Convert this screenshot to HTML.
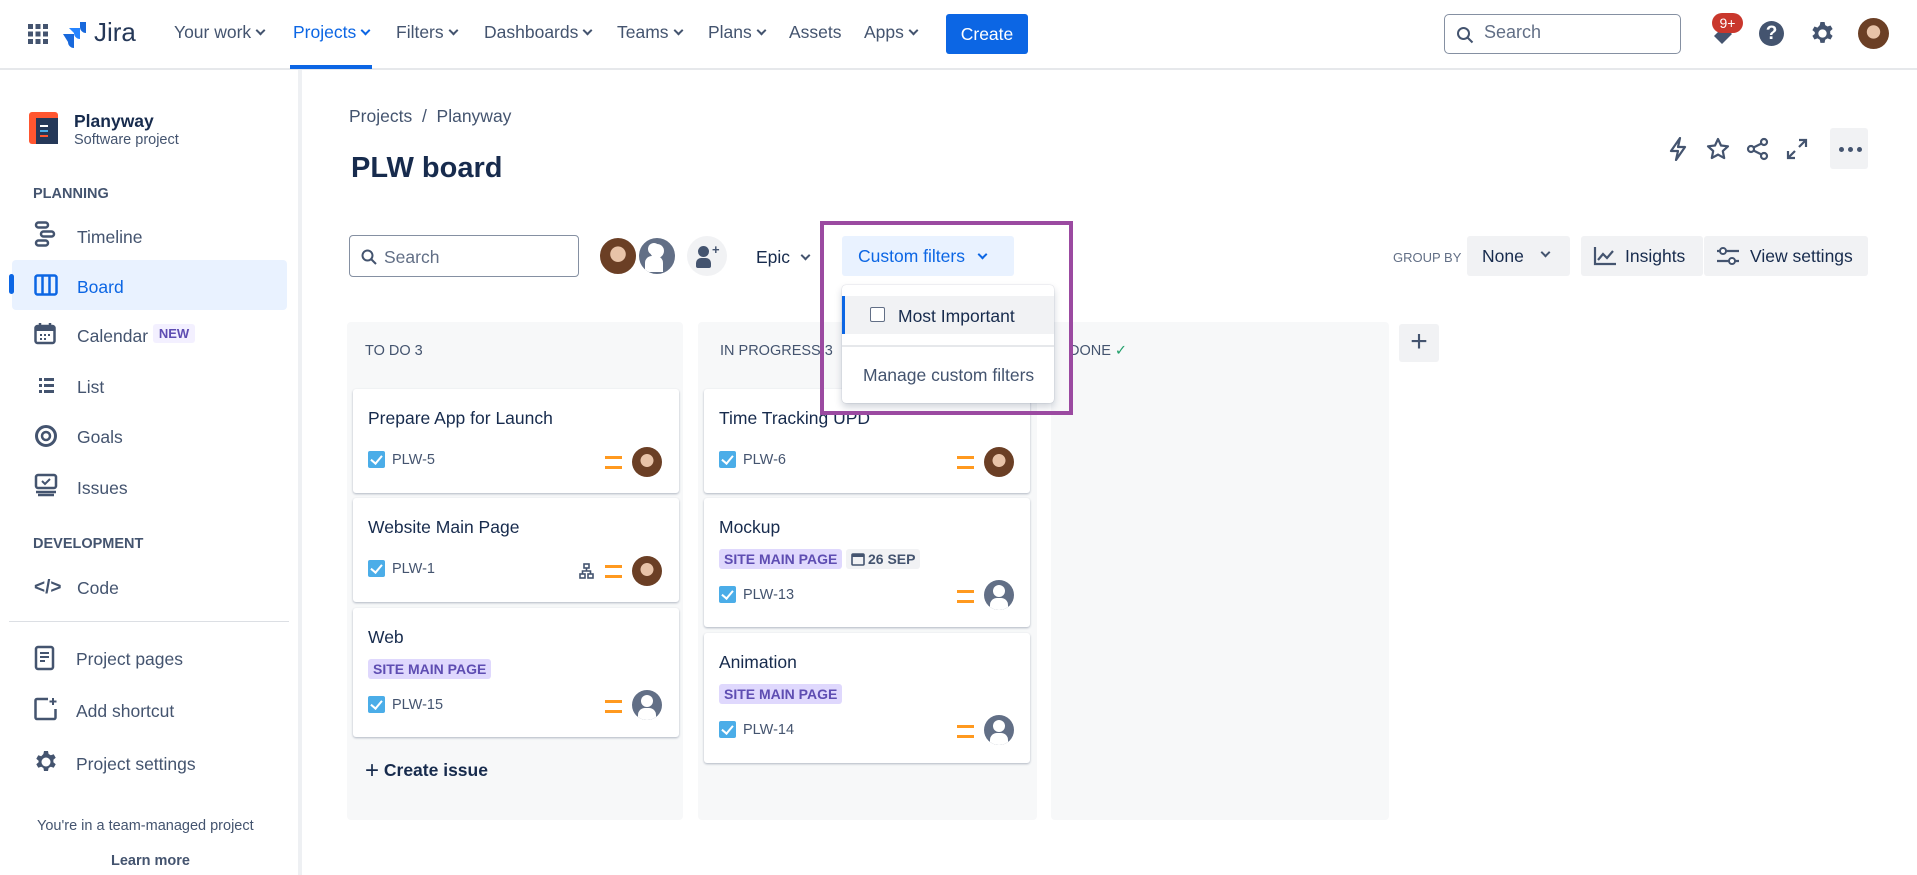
<!DOCTYPE html>
<html><head><meta charset="utf-8"><style>
*{box-sizing:border-box;margin:0;padding:0}
body{width:1917px;height:875px;overflow:hidden;background:#fff;font-family:"Liberation Sans",Arial,sans-serif;color:#172b4d;position:relative;font-size:17.5px}
.a{position:absolute;white-space:nowrap}
.nav{top:22px;font-size:17.5px;color:#44546f}
.chev{display:inline-block;width:7px;height:7px;border-right:2px solid currentColor;border-bottom:2px solid currentColor;transform:rotate(45deg);margin-left:6px;position:relative;top:-4px}
.side{left:77px;font-size:17.5px;color:#44546f}
.ic{position:absolute;left:34px}
.sec{left:33px;font-size:14.5px;font-weight:bold;color:#44546f}
.col{position:absolute;top:322px;height:498px;background:#f7f8f9;border-radius:4px}
.ch{position:absolute;top:21px;left:18px;font-size:14.5px;color:#44546f}
.card{position:absolute;left:6px;width:326px;background:#fff;border-radius:3px;box-shadow:0 1px 2px rgba(9,30,66,.3)}
.ct{position:absolute;left:15px;font-size:17.5px;color:#172b4d}
.key{position:absolute;left:15px;font-size:14.5px;color:#44546f;display:flex;align-items:center}
.cb{width:17px;height:17px;background:#4bade8;border-radius:2px;margin-right:7px;position:relative}
.cb:after{content:"";position:absolute;left:5px;top:2px;width:5px;height:9px;border-right:2px solid #fff;border-bottom:2px solid #fff;transform:rotate(40deg)}
.pri{position:absolute;width:17px;height:13px;border-top:3px solid #ff991f;border-bottom:3px solid #ff991f}
.ph{position:absolute;width:30px;height:30px;border-radius:50%;background:radial-gradient(circle at 50% 45%,#e8c3a8 0 28%,#6b3f25 30% 100%)}
.gen{position:absolute;width:30px;height:30px;border-radius:50%;background:#626f86;overflow:hidden}
.gen:before{content:"";position:absolute;left:9px;top:5px;width:12px;height:12px;border-radius:50%;background:#fff}
.gen:after{content:"";position:absolute;left:6px;top:18px;width:18px;height:16px;border-radius:7px 7px 0 0;background:#fff}
.lab{position:absolute;left:15px;background:#dfd8fd;color:#5e4db2;font-weight:bold;font-size:14px;padding:2px 5px;border-radius:3px}
.btn{position:absolute;top:236px;height:40px;background:#f1f2f4;border-radius:3px;font-size:17.5px;color:#172b4d;display:flex;align-items:center}
</style></head><body>
<div class="a" style="left:0;top:68px;width:1917px;height:2px;background:#e6e8eb"></div>
<svg class="a" style="left:28px;top:24px" width="20" height="20"><g fill="#44546f"><rect x="0" y="0" width="5" height="5"/><rect x="7.5" y="0" width="5" height="5"/><rect x="15" y="0" width="5" height="5"/><rect x="0" y="7.5" width="5" height="5"/><rect x="7.5" y="7.5" width="5" height="5"/><rect x="15" y="7.5" width="5" height="5"/><rect x="0" y="15" width="5" height="5"/><rect x="7.5" y="15" width="5" height="5"/><rect x="15" y="15" width="5" height="5"/></g></svg>
<svg class="a" style="left:63px;top:22px" width="24" height="26" viewBox="0 0 24 26"><path d="M12 0h11v11a6 6 0 0 1-6-6V0z" fill="#1868db"/><path d="M6 6h11v11a6 6 0 0 1-6-6z" fill="#2684ff"/><path d="M0 12h11v14a6 6 0 0 1-6-6z" fill="#1868db"/></svg>
<div class="a" style="left:94px;top:17px;font-size:26px;color:#253858">Jira</div>
<div class="a nav" style="left:174px">Your work<span class="chev"></span></div>
<div class="a nav" style="left:293px;color:#0c66e4">Projects<span class="chev"></span></div>
<div class="a" style="left:290px;top:65px;width:82px;height:4px;background:#0c66e4"></div>
<div class="a nav" style="left:396px">Filters<span class="chev"></span></div>
<div class="a nav" style="left:484px">Dashboards<span class="chev"></span></div>
<div class="a nav" style="left:617px">Teams<span class="chev"></span></div>
<div class="a nav" style="left:708px">Plans<span class="chev"></span></div>
<div class="a nav" style="left:789px">Assets</div>
<div class="a nav" style="left:864px">Apps<span class="chev"></span></div>
<div class="a" style="left:946px;top:14px;width:82px;height:40px;background:#0c66e4;border-radius:3px;color:#fff;font-size:17.5px;text-align:center;line-height:40px">Create</div>
<div class="a" style="left:1444px;top:14px;width:237px;height:40px;border:1.5px solid #8590a2;border-radius:5px"></div>
<svg class="a" style="left:1456px;top:26px" width="18" height="18"><circle cx="7.5" cy="7.5" r="5.5" stroke="#44546f" stroke-width="2" fill="none"/><path d="M11.5 11.5l5 5" stroke="#44546f" stroke-width="2"/></svg>
<div class="a" style="left:1484px;top:22px;font-size:18px;color:#626f86">Search</div>
<svg class="a" style="left:1710px;top:20px" width="28" height="28"><path d="M4 16l10-10 8 8-10 10z" fill="#44546f"/></svg>
<div class="a" style="left:1712px;top:13px;width:31px;height:20px;background:#c9372c;border-radius:10px;color:#fff;font-size:14px;text-align:center;line-height:20px">9+</div>
<div class="a" style="left:1759px;top:21px;width:25px;height:25px;border-radius:50%;background:#44546f;color:#fff;font-weight:bold;font-size:19px;text-align:center;line-height:25px">?</div>
<svg class="a" style="left:1810px;top:21px" width="25" height="25" viewBox="0 0 24 24"><path fill="#44546f" d="M10 1h4l.6 3 2.2 1.3 2.9-1 2 3.4-2.3 2 v2.6l2.3 2-2 3.4-2.9-1-2.2 1.3-.6 3h-4l-.6-3-2.2-1.3-2.9 1-2-3.4 2.3-2V10.7l-2.3-2 2-3.4 2.9 1L9.4 4z"/><circle cx="12" cy="12" r="4" fill="#fff"/></svg>
<div class="ph" style="left:1858px;top:18px;width:31px;height:31px"></div>

<div class="a" style="left:298px;top:70px;width:4px;height:805px;background:#eef0f3"></div>
<div class="a" style="left:29px;top:112px;width:29px;height:32px;background:#ff5630;border-radius:3px"></div>
<div class="a" style="left:36px;top:118px;width:22px;height:26px;background:#253858"></div>
<div class="a" style="left:40px;top:125px;width:8px;height:2px;background:#fff;box-shadow:0 5px #4bade8,0 10px #ff5630"></div>
<div class="a" style="left:74px;top:111px;font-size:17.5px;font-weight:bold;color:#172b4d">Planyway</div>
<div class="a" style="left:74px;top:132px;font-size:14.5px;color:#44546f">Software project</div>
<div class="a sec" style="top:186px">PLANNING</div>
<svg class="ic" style="top:221px" width="22" height="26"><g fill="none" stroke="#44546f" stroke-width="2.5"><rect x="2" y="1.5" width="12" height="5" rx="2.5"/><rect x="7" y="10.5" width="13" height="5" rx="2.5"/><rect x="2" y="19.5" width="12" height="5" rx="2.5"/></g></svg>
<div class="a side" style="top:227px">Timeline</div>
<div class="a" style="left:12px;top:260px;width:275px;height:50px;background:#e9f2ff;border-radius:4px"></div>
<div class="a" style="left:9px;top:274px;width:5px;height:20px;background:#0c66e4;border-radius:3px"></div>
<svg class="ic" style="top:274px" width="24" height="22"><rect x="1.5" y="1.5" width="21" height="19" rx="2" fill="none" stroke="#0c66e4" stroke-width="2.5"/><path d="M8.5 2v18M15.5 2v18" stroke="#0c66e4" stroke-width="2.5"/></svg>
<div class="a side" style="top:277px;color:#0c66e4">Board</div>
<svg class="ic" style="top:323px" width="22" height="22"><rect x="1.5" y="3" width="19" height="17" rx="2" fill="none" stroke="#44546f" stroke-width="2.5"/><rect x="1.5" y="3" width="19" height="5" fill="#44546f"/><path d="M6 0v5M16 0v5" stroke="#44546f" stroke-width="2.5"/><g fill="#44546f"><rect x="6" y="11" width="2" height="2"/><rect x="10" y="11" width="2" height="2"/><rect x="14" y="11" width="2" height="2"/><rect x="6" y="15" width="2" height="2"/><rect x="10" y="15" width="2" height="2"/></g></svg>
<div class="a side" style="top:326px">Calendar</div>
<div class="a" style="left:153px;top:324px;width:42px;height:19px;background:#f3f0ff;border-radius:3px;color:#5e4db2;font-size:13px;font-weight:bold;text-align:center;line-height:19px">NEW</div>
<svg class="ic" style="top:378px" width="20" height="16"><g fill="#44546f"><rect x="5" y="0" width="3" height="3"/><rect x="10" y="0" width="10" height="3"/><rect x="5" y="6" width="3" height="3"/><rect x="10" y="6" width="10" height="3"/><rect x="5" y="12" width="3" height="3"/><rect x="10" y="12" width="10" height="3"/></g></svg>
<div class="a side" style="top:377px">List</div>
<svg class="ic" style="top:424px" width="24" height="24"><circle cx="12" cy="12" r="9.5" fill="none" stroke="#44546f" stroke-width="3"/><circle cx="12" cy="12" r="4" fill="none" stroke="#44546f" stroke-width="2.5"/></svg>
<div class="a side" style="top:427px">Goals</div>
<svg class="ic" style="top:473px" width="24" height="24"><rect x="2" y="2" width="20" height="13" rx="2" fill="none" stroke="#44546f" stroke-width="2.5"/><path d="M8 8l3 3 5-5" stroke="#44546f" stroke-width="2" fill="none"/><path d="M2 19h20M4 22h16" stroke="#44546f" stroke-width="2.5"/></svg>
<div class="a side" style="top:478px">Issues</div>
<div class="a sec" style="top:536px">DEVELOPMENT</div>
<div class="a" style="left:34px;top:577px;font-size:19px;font-weight:bold;color:#44546f">&lt;/&gt;</div>
<div class="a side" style="top:578px">Code</div>
<div class="a" style="left:9px;top:621px;width:280px;height:1px;background:#dcdfe4"></div>
<svg class="ic" style="top:645px" width="22" height="26"><rect x="2" y="2" width="17" height="22" rx="2" fill="none" stroke="#44546f" stroke-width="2.5"/><path d="M6 8h9M6 12h9M6 16h5" stroke="#44546f" stroke-width="2"/></svg>
<div class="a side" style="left:76px;top:649px">Project pages</div>
<svg class="ic" style="top:697px" width="24" height="24"><path d="M14 2H3a1.5 1.5 0 0 0-1.5 1.5v17A1.5 1.5 0 0 0 3 22h17a1.5 1.5 0 0 0 1.5-1.5V12" fill="none" stroke="#44546f" stroke-width="2.5"/><path d="M19 1v7M15.5 4.5h7" stroke="#44546f" stroke-width="2"/></svg>
<div class="a side" style="left:76px;top:701px">Add shortcut</div>
<svg class="ic" style="top:750px" width="24" height="24" viewBox="0 0 24 24"><path fill="#44546f" d="M10 1h4l.6 3 2.2 1.3 2.9-1 2 3.4-2.3 2v2.6l2.3 2-2 3.4-2.9-1-2.2 1.3-.6 3h-4l-.6-3-2.2-1.3-2.9 1-2-3.4 2.3-2V10.7l-2.3-2 2-3.4 2.9 1L9.4 4z"/><circle cx="12" cy="12" r="4.5" fill="#fff"/></svg>
<div class="a side" style="left:76px;top:754px">Project settings</div>
<div class="a" style="left:37px;top:818px;font-size:14.5px;color:#44546f">You're in a team-managed project</div>
<div class="a" style="left:111px;top:853px;font-size:14.5px;font-weight:bold;color:#44546f">Learn more</div>

<div class="a" style="left:349px;top:106px;font-size:17.5px;color:#44546f">Projects &nbsp;/&nbsp; Planyway</div>
<div class="a" style="left:351px;top:152px;font-size:29px;font-weight:bold;color:#172b4d">PLW board</div>
<svg class="a" style="left:1667px;top:137px" width="22" height="24"><path d="M13 1L4 14h7l-2 9 9-13h-7z" fill="none" stroke="#44546f" stroke-width="2.2" stroke-linejoin="round"/></svg>
<svg class="a" style="left:1706px;top:137px" width="24" height="24"><path d="M12 2l3 6.5 7 .8-5.2 4.8 1.4 7L12 17.6 5.8 21l1.4-7L2 9.3l7-.8z" fill="none" stroke="#44546f" stroke-width="2.2" stroke-linejoin="round"/></svg>
<svg class="a" style="left:1746px;top:137px" width="24" height="24"><circle cx="18" cy="5" r="3" fill="none" stroke="#44546f" stroke-width="2.2"/><circle cx="5" cy="12" r="3" fill="none" stroke="#44546f" stroke-width="2.2"/><circle cx="18" cy="19" r="3" fill="none" stroke="#44546f" stroke-width="2.2"/><path d="M7.5 10.5l8-4M7.5 13.5l8 4" stroke="#44546f" stroke-width="2.2"/></svg>
<svg class="a" style="left:1786px;top:138px" width="22" height="22"><path d="M13 2h7v7M20 2l-7 7M9 20H2v-7M2 20l7-7" fill="none" stroke="#44546f" stroke-width="2.2"/></svg>
<div class="a" style="left:1830px;top:128px;width:38px;height:41px;background:#f1f2f4;border-radius:3px"></div>
<div class="a" style="left:1839px;top:147px;width:5px;height:5px;border-radius:50%;background:#44546f;box-shadow:9px 0 #44546f,18px 0 #44546f"></div>

<div class="a" style="left:349px;top:235px;width:230px;height:42px;border:1.5px solid #8590a2;border-radius:4px"></div>
<svg class="a" style="left:361px;top:249px" width="16" height="16"><circle cx="6.5" cy="6.5" r="5" stroke="#44546f" stroke-width="2" fill="none"/><path d="M10 10l5 5" stroke="#44546f" stroke-width="2"/></svg>
<div class="a" style="left:384px;top:247px;font-size:17.5px;color:#626f86">Search</div>
<div class="gen" style="left:636px;top:235px;width:42px;height:42px;border:3px solid #fff"><div style="position:absolute;left:11px;top:6px;width:14px;height:14px;border-radius:50%;background:#fff"></div></div>
<div class="ph" style="left:597px;top:235px;width:42px;height:42px;border:3px solid #fff"></div>
<div class="a" style="left:687px;top:236px;width:40px;height:40px;border-radius:50%;background:#f1f2f4"></div>
<div class="a" style="left:698px;top:246px;width:11px;height:11px;border-radius:50%;background:#44546f"></div>
<div class="a" style="left:696px;top:258px;width:15px;height:10px;border-radius:5px 5px 2px 2px;background:#44546f"></div>
<div class="a" style="left:712px;top:242px;font-size:13px;font-weight:bold;color:#44546f">+</div>
<div class="a" style="left:756px;top:247px;font-size:17.5px;color:#172b4d">Epic<span class="chev" style="margin-left:12px;color:#44546f"></span></div>
<div class="a" style="left:842px;top:236px;width:172px;height:40px;background:#e9f2ff;border-radius:3px;color:#0c66e4;font-size:17.5px;line-height:40px;padding-left:16px">Custom filters<span class="chev" style="margin-left:14px"></span></div>
<div class="a" style="left:1393px;top:250px;font-size:13px;color:#626f86">GROUP BY</div>
<div class="btn" style="left:1467px;width:103px;padding-left:15px">None<span class="chev" style="margin-left:18px;color:#44546f"></span></div>
<div class="btn" style="left:1581px;width:122px;padding-left:12px"><svg width="24" height="20" style="margin-right:8px"><path d="M2 1v17h21" fill="none" stroke="#44546f" stroke-width="2.2"/><path d="M5 14l5-6 4 4 6-7" fill="none" stroke="#44546f" stroke-width="2.2"/></svg>Insights</div>
<div class="btn" style="left:1704px;width:164px;padding-left:12px"><svg width="24" height="20" style="margin-right:10px"><path d="M1 5h22M1 15h22" stroke="#44546f" stroke-width="2.2"/><circle cx="7" cy="5" r="3" fill="#fff" stroke="#44546f" stroke-width="2"/><circle cx="16" cy="15" r="3" fill="#fff" stroke="#44546f" stroke-width="2"/></svg>View settings</div>

<div class="col" style="left:347px;width:336px">
 <div class="ch">TO DO 3</div>
 <div class="card" style="top:67px;height:104px"><div class="ct" style="top:19px">Prepare App for Launch</div><div class="key" style="top:62px"><span class="cb"></span>PLW-5</div><div class="pri" style="left:252px;top:67px"></div><div class="ph" style="left:279px;top:58px"></div></div>
 <div class="card" style="top:176px;height:104px"><div class="ct" style="top:19px">Website Main Page</div><div class="key" style="top:62px"><span class="cb"></span>PLW-1</div><svg style="position:absolute;left:226px;top:65px" width="15" height="16"><g fill="none" stroke="#44546f" stroke-width="1.6"><rect x="5" y="1" width="5" height="4"/><rect x="1" y="11" width="5" height="4"/><rect x="9" y="11" width="5" height="4"/><path d="M7.5 5v3M3.5 11V8h8v3"/></g></svg><div class="pri" style="left:252px;top:67px"></div><div class="ph" style="left:279px;top:58px"></div></div>
 <div class="card" style="top:286px;height:129px"><div class="ct" style="top:19px">Web</div><div class="lab" style="top:51px">SITE MAIN PAGE</div><div class="key" style="top:88px"><span class="cb"></span>PLW-15</div><div class="pri" style="left:252px;top:92px"></div><div class="gen" style="left:279px;top:82px"></div></div>
 <div class="a" style="left:18px;top:433px;font-size:17.5px;font-weight:bold;color:#172b4d"><span style="font-weight:normal;font-size:24px;position:relative;top:2px">+</span> Create issue</div>
</div>
<div class="col" style="left:698px;width:339px">
 <div class="ch" style="left:22px">IN PROGRESS 3</div>
 <div class="card" style="top:67px;height:104px"><div class="ct" style="top:19px">Time Tracking UPD</div><div class="key" style="top:62px"><span class="cb"></span>PLW-6</div><div class="pri" style="left:253px;top:67px"></div><div class="ph" style="left:280px;top:58px"></div></div>
 <div class="card" style="top:176px;height:129px"><div class="ct" style="top:19px">Mockup</div><div class="lab" style="top:51px">SITE MAIN PAGE</div><div class="a" style="left:142px;top:51px;background:#f1f2f4;color:#44546f;font-weight:bold;font-size:14px;padding:2px 5px 2px 22px;border-radius:3px">26 SEP<svg style="position:absolute;left:5px;top:3px" width="14" height="14"><rect x="1" y="2" width="12" height="11" rx="1" fill="none" stroke="#44546f" stroke-width="1.6"/><rect x="1" y="2" width="12" height="3" fill="#44546f"/></svg></div><div class="key" style="top:88px"><span class="cb"></span>PLW-13</div><div class="pri" style="left:253px;top:92px"></div><div class="gen" style="left:280px;top:82px"></div></div>
 <div class="card" style="top:311px;height:130px"><div class="ct" style="top:19px">Animation</div><div class="lab" style="top:51px">SITE MAIN PAGE</div><div class="key" style="top:88px"><span class="cb"></span>PLW-14</div><div class="pri" style="left:253px;top:92px"></div><div class="gen" style="left:280px;top:82px"></div></div>
</div>
<div class="col" style="left:1051px;width:338px">
 <div class="ch" style="left:18px">DONE <span style="color:#22a06b">✓</span></div>
</div>
<div class="a" style="left:1399px;top:324px;width:40px;height:38px;background:#f1f2f4;border-radius:3px;text-align:center;font-size:30px;line-height:36px;color:#44546f">+</div>

<div class="a" style="left:842px;top:285px;width:212px;height:118px;background:#fff;border-radius:4px;box-shadow:0 4px 8px rgba(9,30,66,.2),0 0 1px rgba(9,30,66,.3)"></div>
<div class="a" style="left:842px;top:296px;width:212px;height:38px;background:#f1f2f4;border-left:3px solid #0c66e4"></div>
<div class="a" style="left:870px;top:307px;width:15px;height:15px;border:1.5px solid #626f86;border-radius:2px;background:#fff"></div>
<div class="a" style="left:898px;top:306px;font-size:17.5px;color:#172b4d">Most Important</div>
<div class="a" style="left:842px;top:345px;width:212px;height:2px;background:#e6e8eb"></div>
<div class="a" style="left:863px;top:365px;font-size:17.5px;color:#44546f">Manage custom filters</div>
<div class="a" style="left:820px;top:221px;width:253px;height:194px;border:4px solid #9b4aa1"></div>
</body></html>
